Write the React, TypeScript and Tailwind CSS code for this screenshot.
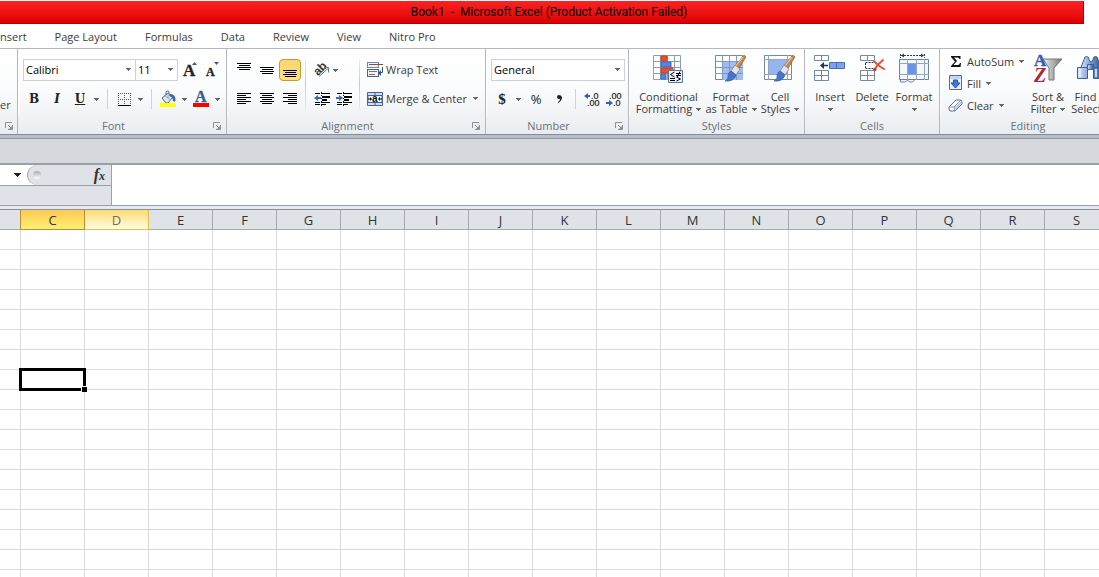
import React from "react";

const LETTERS = "CDEFGHIJKLMNOPQRS".split("");
const ROWS = Array.from({ length: 18 }, (_, i) => i + 1);
const ACTIVE_ROW = 8;
const TABS = ["nsert", "Page Layout", "Formulas", "Data", "Review", "View", "Nitro Pro"];

type Kids = { children?: React.ReactNode };

function Svg({ w, h, children }: Kids & { w: number; h: number }) {
  return (
    <svg width={w} height={h} viewBox={`0 0 ${w} ${h}`} fill="none" aria-hidden="true" className="block shrink-0 overflow-visible">
      {children}
    </svg>
  );
}

function Caret({ dark = false }: { dark?: boolean }) {
  return dark ? (
    <Svg w={7} h={4}><path d="M0 0h7v1H6v1H5v1H4v1H3V3H2V2H1V1H0z" fill="#222" /></Svg>
  ) : (
    <Svg w={5} h={3}><path d="M0 0h5v1H4v1H3v1H2V2H1V1H0z" fill="#686868" /></Svg>
  );
}

function IconButton({ label, active = false, children }: Kids & { label: string; active?: boolean }) {
  return (
    <button
      type="button"
      aria-label={label}
      aria-pressed={active || undefined}
      className={
        active
          ? "flex h-[22px] w-[22px] shrink-0 items-center justify-center rounded-sm border border-[#c29b3a] bg-linear-to-b from-[#fbd570] to-[#ffe27a]"
          : "flex h-[22px] w-[22px] shrink-0 items-center justify-center"
      }
    >
      {children}
    </button>
  );
}

function CaretButton({ label }: { label: string }) {
  return (
    <button type="button" aria-label={label} className="flex h-[22px] w-[11px] shrink-0 items-center justify-center">
      <Caret />
    </button>
  );
}

function Rule() {
  return <div className="mx-[5px] h-5 w-px shrink-0 bg-[#cfd2d7]" />;
}

function TallRule() {
  return <div className="mr-[5px] ml-1 w-px shrink-0 bg-linear-to-b from-[#eceef0] via-[#c3c7cd] to-[#eceef0]" />;
}

function Group({ title, width, launcher = false, children }: Kids & { title: string; width: string; launcher?: boolean }) {
  return (
    <section aria-label={title} className={`flex shrink-0 flex-col border-r border-[#b4b8be] ${width}`}>
      <div className="flex h-[68px] border-l border-white">{children}</div>
      <div className="flex h-4 items-center">
        <span className="flex-1 text-center text-[#6b7078]">{title}</span>
        {launcher && (
          <button type="button" aria-label={`${title} settings`} className="flex w-[17px] justify-center pt-px pr-px">
            <Svg w={8} h={8}>
              <path d="M0.5 6V.5H7" stroke="#8c9096" />
              <path d="M3 3l3 3M7.500 3v4.500H3" stroke="#8c9096" />
              <path d="M7 4v3H4z" fill="#8c9096" />
            </Svg>
          </button>
        )}
      </div>
    </section>
  );
}

function Drop({ label, value, width }: { label: string; value: string; width: string }) {
  return (
    <div className={`relative h-[22px] shrink-0 ${width}`}>
      <select
        aria-label={label}
        defaultValue={value}
        className="block h-full w-full appearance-none border border-[#cdd1d6] bg-white pb-0.5 pl-0.5 text-black outline-none"
      >
        <option>{value}</option>
      </select>
      <span className="pointer-events-none absolute top-[9px] right-[5px]">
        <Caret />
      </span>
    </div>
  );
}

function BigButton({ lines, width, icon }: { lines: [string, string]; width: string; icon: React.ReactNode }) {
  return (
    <button type="button" className={`flex shrink-0 flex-col items-center whitespace-nowrap pt-[5px] leading-3 ${width}`}>
      <span className="flex h-[30px] items-center">{icon}</span>
      <span className="mt-[7px] h-3">{lines[0]}</span>
      <span className="flex h-3 items-center gap-1">
        {lines[1]}
        <Caret />
      </span>
    </button>
  );
}

function Lines({ rows }: { rows: [number, number, number][] }) {
  return (
    <Svg w={16} h={16}>
      {rows.map(([x, y, w]) => <rect key={y} x={x} y={y} width={w} height={1} fill="#000" shapeRendering="crispEdges" />)}
    </Svg>
  );
}

const GrowFont = () => (
  <Svg w={18} h={18}>
    <text x="2" y="15" fontFamily="Liberation Serif" fontWeight="bold" fontSize="17" fill="#222" stroke="#222" strokeWidth=".3">A</text>
    <path d="M11 4l2.500-3L16 4z" fill="#3458a8" />
  </Svg>
);
const ShrinkFont = () => (
  <Svg w={18} h={18}>
    <text x="3" y="15" fontFamily="Liberation Serif" fontWeight="bold" fontSize="12" fill="#222" stroke="#222" strokeWidth=".3">A</text>
    <path d="M11 1l2.500 3L16 1z" fill="#3458a8" />
  </Svg>
);
const Borders = () => (
  <Svg w={14} h={14}>
    <path d="M1.500 1v12M7.500 1v12M13.500 1v12M1 1.500h13M1 7.500h13" stroke="#555" strokeDasharray="1 1" />
    <path d="M1 13.500h13" stroke="#000" />
  </Svg>
);
const Bucket = () => (
  <Svg w={18} h={18}>
    <path d="M7 5V2.500Q7 1 8.500 1T10 2.500V6" stroke="#48556a" />
    <path d="M3 8l6-5 5 4-5 6H7z" fill="#dce8f6" stroke="#4d607e" />
    <path d="M6 6l6 4M9 3v5" stroke="#8ca5c5" />
    <path d="M11 4q6 0 5.500 7-1 1.500-2.500 0 0-4-4-5z" fill="#3e65aa" />
    <path d="M1 13h16v4H1z" fill="#ffff00" />
  </Svg>
);
const FontColor = () => (
  <Svg w={18} h={18}>
    <text x="3" y="12" fontFamily="Liberation Serif" fontWeight="bold" fontSize="16" fill="#35599b" stroke="#35599b" strokeWidth=".3">A</text>
    <path d="M1 13h16v4H1z" fill="#ff0000" />
  </Svg>
);
const Orientation = () => (
  <Svg w={18} h={18}>
    <text x="1" y="12" transform="rotate(-45 7 9)" fontFamily="Liberation Sans" fontWeight="bold" fontSize="12" fill="#333">ab</text>
    <path d="M6 15.500l9-8M11 6.500h4.500v5" stroke="#777" />
  </Svg>
);
function Indent({ inward = false }: { inward?: boolean }) {
  return (
    <Svg w={17} h={16}>
      <g shapeRendering="crispEdges" fill="#000">
        <path d="M1 2h5v1H1zM7 2h9v1H7zM8 5h8v2H8zM8 8h5v2H8zM1 11h5v1H1zM7 11h9v1H7zM1 13h5v1H1zM7 13h5v1H7z" />
        <path d="M7 1h1v1H7zM7 4h1v1H7zM7 7h1v1H7zM7 10h1v1H7zM7 14h1v1H7z" />
      </g>
      {inward ? (
        <path d="M3 4l4 3-4 3V8H0V6h3z" fill="#3a68c4" />
      ) : (
        <path d="M4 4L0 7l4 3V8h3V6H4z" fill="#3a68c4" />
      )}
    </Svg>
  );
}
const WrapIcon = () => (
  <Svg w={17} h={16}>
    <rect x=".5" y=".5" width="11" height="5" fill="#eef3fa" stroke="#7088ab" />
    <path d="M2 2.500h14" stroke="#934f2b" />
    <rect x=".5" y="7.500" width="11" height="7" fill="#eef3fa" stroke="#41659a" />
    <path d="M2 9.500h8M2 12.500h6" stroke="#a8653b" />
    <path d="M15.500 5v5.500H13" stroke="#35537f" />
    <path d="M14 8v6l-3-3z" fill="#35537f" />
  </Svg>
);
const MergeIcon = () => (
  <Svg w={17} h={16}>
    <path d="M.5 1.500h15v13H.5zM8 1v3M8 12v3" fill="#cfddf0" stroke="#41659a" />
    <path d="M1 4.500h14v7H1z" fill="#fff" stroke="#41659a" />
    <text x="5" y="11" fontFamily="Liberation Sans" fontWeight="bold" fontSize="10" fill="#111">a</text>
    <path d="M1 8h3M12 8h3" stroke="#111" />
    <path d="M3 6l2 2-2 2zM13 6l-2 2 2 2z" fill="#111" />
  </Svg>
);
function Decimal({ less = false }: { less?: boolean }) {
  return (
    <Svg w={18} h={16}>
      <g fontFamily="Liberation Sans" fontSize="9" fill="#222" stroke="#222" strokeWidth=".2">
        <text x={less ? 4 : 8} y="8">{less ? ".00" : ".0"}</text>
        <text x={less ? 8 : 4} y="15">{less ? ".0" : ".00"}</text>
      </g>
      {less ? (
        <path d="M1 11h3V9l4 3-4 3v-2H1z" fill="#315fc0" />
      ) : (
        <path d="M7 4H5V2L1 5l4 3V6h2z" fill="#315fc0" />
      )}
    </Svg>
  );
}
const Brush = () => (
  <g>
    <path d="M29 1l2 2-8 13-4-3z" fill="#c58545" stroke="#855d3a" strokeWidth=".6" />
    <path d="M28 3l-7 9" stroke="#efcb9a" strokeWidth="1.200" />
    <path d="M20 11l5 4-4 6-5-4z" fill="#e3e6e9" stroke="#747c86" strokeWidth=".7" />
    <path d="M16 17l5 4q-2 7-11 6 4-2 3-6 1-3 3-4z" fill="#4775c8" stroke="#2e539c" strokeWidth=".6" />
  </g>
);
const Conditional = () => (
  <Svg w={32} h={30}>
    <g stroke="#8b9fb9">
      <path d="M.5 1.500h27v24H.5z" fill="#fff" />
      <path d="M0 7.500h28M0 13.500h28M0 19.500h28M7.500 1v25M14.500 1v25M21.500 1v25" />
    </g>
    <path d="M8 2h6v5H8zM8 14h12v5H8z" fill="#ee4b2d" stroke="#d83d22" />
    <path d="M8 8h10v5H8zM8 20h5v5H8z" fill="#5685e2" stroke="#3e69ba" />
    <path d="M15.500 16.500h14v12h-14z" fill="#eef2f8" stroke="#52749f" />
    <path d="M21.500 18l-4 2.500 4 2.500M17 24.500h5M17 26.500h5M23 19.500h5M23 21.500h5M27 17.500l-3 6M23.500 23l4 2-4 2" stroke="#000" />
  </Svg>
);
const TableStyle = () => (
  <Svg w={32} h={30}>
    <path d="M.5 1.500h27v24H.5z" fill="#fff" stroke="#7189a9" />
    <path d="M8 8h20v18H8z" fill="#9fbdf2" />
    <path d="M0 7.500h28M0 13.500h28M0 19.500h28M7.500 1v25M14.500 1v25M21.500 1v25" stroke="#7f99bd" />
    <Brush />
  </Svg>
);
const CellStyle = () => (
  <Svg w={32} h={30}>
    <path d="M.5 1.500h27v24H.5z" fill="#fff" stroke="#7189a9" />
    <path d="M5 6h19v15H5z" fill="#94b5f0" />
    <path d="M0 5.500h28M0 20.500h28M4.500 1v25M23.500 1v25" stroke="#91a6c2" />
    <Brush />
  </Svg>
);
const Stacks = () => (
  <path d="M.5 1.500h14v5H.5zM7.500 1.500v5M.5 16.500h14v10H.5zM7.500 16.500v10M.5 21.500h14" fill="#fff" stroke="#7588a3" />
);
const InsertIcon = () => (
  <Svg w={32} h={30}>
    <Stacks />
    <path d="M15.500 8.500h15v6h-15zM22.500 8.500v6" fill="#7ba2ed" stroke="#476eb1" />
    <path d="M14 11.500H8" stroke="#1f3552" strokeWidth="1.500" />
    <path d="M10 8l-4 3.500 4 3.500z" fill="#1f3552" />
  </Svg>
);
const DeleteIcon = () => (
  <Svg w={24} h={30}>
    <Stacks />
    <path d="M5.500 8.500h12M5.500 14.500h9M5.500 9v6" stroke="#263f68" strokeDasharray="2 1" />
    <path d="M14 7q3 4 10 8M23 6q-5 4-9 10" stroke="#ee4d31" strokeWidth="2" strokeLinecap="round" />
    <circle cx="15" cy="15.500" r="1.500" fill="#e32915" />
  </Svg>
);
const FormatIcon = () => (
  <Svg w={32} h={30}>
    <path d="M3 1.500h22M2.500 0v4M26.500 0v4" stroke="#263f5f" strokeDasharray="2 1" />
    <path d="M3 1.500l3-2v4zM26 1.500l-3-2v4z" fill="#263f5f" />
    <path d="M2.500 26v2h5l2-2 2 2h3l2-2" fill="#eef3fa" stroke="#71839c" />
    <path d="M1.500 5.500h29v20h-29z" fill="#f4f7fc" stroke="#6d819f" />
    <path d="M10 10h8v11h-8z" fill="#6994e9" />
    <path d="M1 9.500h30M1 20.500h30M9.500 5v21M18.500 5v21M26.500 5v21" stroke="#94a7c3" />
  </Svg>
);
const SortIcon = () => (
  <Svg w={30} h={30}>
    <defs>
      <linearGradient id="funnel"><stop stopColor="#eee" /><stop offset="1" stopColor="#777" /></linearGradient>
    </defs>
    <path d="M10 5h19l-8 9v12h-5V14z" fill="url(#funnel)" stroke="#777" />
    <text x="1" y="12" fontFamily="Liberation Serif" fontWeight="bold" fontSize="17" fill="#355ea9" stroke="#355ea9" strokeWidth=".4">A</text>
    <text x="1" y="28" fontFamily="Liberation Serif" fontWeight="bold" fontStyle="italic" fontSize="20" fill="#ad2834">Z</text>
  </Svg>
);
const FindIcon = () => (
  <Svg w={28} h={28}>
    <defs>
      <linearGradient id="lens"><stop stopColor="#dbe8fc" /><stop offset=".5" stopColor="#7698d0" /><stop offset="1" stopColor="#31578f" /></linearGradient>
    </defs>
    <g fill="url(#lens)" stroke="#3e5f94">
      <path d="M7 4.500Q7 1.500 9.500 1.500T12 4.500l2 3 2-3q0-3 2.500-3T21 4.500l3 8H4z" />
      <path d="M.5 12.500h10v11H.5zM16.500 12.500h10v11h-10z" />
      <path d="M10.500 9.500h6v5h-6z" />
    </g>
    <path d="M3 14v8M19 14v8" stroke="#e8f1ff" strokeWidth="1.500" />
  </Svg>
);
const SigmaIcon = () => (
  <Svg w={14} h={14}>
    <path d="M2 2h9.500v3h-1Q10 3.500 8.500 3.500H5L8 7l-3.500 4H9q1.500 0 2-2h1l-.5 4H2v-1l4-4.500L2 3z" fill="#111" />
  </Svg>
);
const FillIcon = () => (
  <Svg w={14} h={16}>
    <path d="M.5.5h12v14H.5z" fill="#eaf1fc" stroke="#52709e" />
    <path d="M1 1h11v3H1z" fill="#c5d6ef" />
    <path d="M4.500 5h4v3H11l-4.500 5L2 8h2.500z" fill="#3f78df" stroke="#244fa6" />
  </Svg>
);
const EraserIcon = () => (
  <Svg w={15} h={13}>
    <path d="M1 8l7-7h5l1 2v2l-7 7H2L1 10z" fill="#fff" stroke="#5b7194" />
    <path d="M1 8h5l7-7M6 8l1 4" stroke="#7d92b2" />
    <path d="M6.500 8.500L13 2.500l.5 2.500L7 11z" fill="#b6cae8" />
  </Svg>
);

function SmallAction({ icon, children }: Kids & { icon: React.ReactNode }) {
  return (
    <button type="button" className="flex h-[22px] items-center whitespace-nowrap">
      <span className="mr-1 flex w-[15px] justify-center">{icon}</span>
      {children}
      <span className="ml-[5px]"><Caret /></span>
    </button>
  );
}

function FontGroup() {
  return (
    <Group title="Font" width="w-[209px]" launcher>
      <div className="flex flex-col gap-[7px] pt-[10px] pl-1">
        <div className="flex">
          <Drop label="Font" value="Calibri" width="w-[113px]" />
          <Drop label="Font size" value="11" width="-ml-px w-[43px]" />
          <div className="ml-px flex">
            <IconButton label="Increase font size"><GrowFont /></IconButton>
            <IconButton label="Decrease font size"><ShrinkFont /></IconButton>
          </div>
        </div>
        <div className="flex items-center">
          <div className="flex gap-px font-['DejaVu_Serif',serif] text-[12px] text-[#222]">
            <IconButton label="Bold"><b>B</b></IconButton>
            <IconButton label="Italic"><i className="font-semibold">I</i></IconButton>
            <IconButton label="Underline"><u className="font-semibold">U</u></IconButton>
          </div>
          <CaretButton label="Underline styles" />
          <Rule />
          <IconButton label="Borders"><Borders /></IconButton>
          <CaretButton label="Border styles" />
          <Rule />
          <IconButton label="Fill color"><Bucket /></IconButton>
          <CaretButton label="Fill colors" />
          <IconButton label="Font color"><FontColor /></IconButton>
          <CaretButton label="Font colors" />
        </div>
      </div>
    </Group>
  );
}

function AlignmentGroup() {
  return (
    <Group title="Alignment" width="w-[259px]" launcher>
      <div className="flex pt-[10px] pb-[7px] pl-[5px]">
        <div className="grid grid-cols-3 content-start gap-x-px gap-y-[7px]">
          <IconButton label="Top align"><Lines rows={[[1, 1, 14], [3, 3, 11], [1, 5, 14], [3, 7, 11]]} /></IconButton>
          <IconButton label="Middle align"><Lines rows={[[1, 5, 14], [3, 7, 11], [1, 9, 14], [3, 11, 11]]} /></IconButton>
          <IconButton label="Bottom align" active><Lines rows={[[1, 8, 14], [3, 10, 11], [1, 12, 14], [3, 14, 11]]} /></IconButton>
          <IconButton label="Align left"><Lines rows={[[1, 2, 14], [1, 4, 9], [1, 6, 14], [1, 8, 9], [1, 10, 14], [1, 12, 9]]} /></IconButton>
          <IconButton label="Align center"><Lines rows={[[1, 2, 14], [3, 4, 10], [1, 6, 14], [3, 8, 10], [1, 10, 14], [3, 12, 10]]} /></IconButton>
          <IconButton label="Align right"><Lines rows={[[1, 2, 14], [6, 4, 9], [1, 6, 14], [6, 8, 9], [1, 10, 14], [6, 12, 9]]} /></IconButton>
        </div>
        <TallRule />
        <div className="flex flex-col gap-[7px]">
          <div className="flex">
            <IconButton label="Orientation"><Orientation /></IconButton>
            <button type="button" aria-label="Orientation options" className="flex w-[7px] items-center">
              <Caret />
            </button>
          </div>
          <div className="flex">
            <IconButton label="Decrease indent"><Indent /></IconButton>
            <IconButton label="Increase indent"><Indent inward /></IconButton>
          </div>
        </div>
        <TallRule />
        <div className="flex flex-col items-start gap-[7px] pl-0.5 whitespace-nowrap">
          <button type="button" className="flex h-[22px] items-center gap-0.5 pb-px"><WrapIcon />Wrap Text</button>
          <button type="button" className="flex h-[22px] items-center gap-0.5 pb-px">
            <MergeIcon />Merge &amp; Center<span className="ml-1"><Caret /></span>
          </button>
        </div>
      </div>
    </Group>
  );
}

function NumberGroup() {
  return (
    <Group title="Number" width="w-[143px]" launcher>
      <div className="flex flex-col gap-[7px] pt-[10px] pl-1">
        <Drop label="Number format" value="General" width="w-[134px]" />
        <div className="flex items-center">
          <IconButton label="Currency"><b className="font-['Liberation_Serif',serif] text-[15px] text-[#222]">$</b></IconButton>
          <CaretButton label="Currency formats" />
          <div className="ml-px flex gap-px">
            <IconButton label="Percent"><span className="text-[13px] text-[#222]">%</span></IconButton>
            <IconButton label="Comma style">
              <Svg w={5} h={8}><path d="M0 2q0-2 2-2t3 2q0 4-4 6V7q2-1 2-3Q0 4 0 2z" fill="#222" /></Svg>
            </IconButton>
          </div>
          <Rule />
          <IconButton label="Increase decimal"><Decimal /></IconButton>
          <IconButton label="Decrease decimal"><Decimal less /></IconButton>
        </div>
      </div>
    </Group>
  );
}

function Ribbon() {
  return (
    <div className="flex h-[87px] shrink-0 overflow-hidden border-t border-b border-t-[#b5b8be] border-b-[#868c95] bg-linear-to-b from-white via-[#fafbfc] to-[#e9ecf0]">
      <section aria-label="Clipboard" className="flex w-[18px] shrink-0 flex-col justify-between border-r border-[#b4b8be]">
        <button type="button" className="mt-12 text-left">er</button>
        <button type="button" aria-label="Clipboard settings" className="mb-1 flex justify-center">
          <Svg w={8} h={8}>
            <path d="M0.5 6V.5H7" stroke="#8c9096" />
            <path d="M3 3l3 3M7.500 3v4.500H3" stroke="#8c9096" />
            <path d="M7 4v3H4z" fill="#8c9096" />
          </Svg>
        </button>
      </section>
      <FontGroup />
      <AlignmentGroup />
      <NumberGroup />
      <Group title="Styles" width="w-[176px]">
        <div className="flex pl-1">
          <BigButton lines={["Conditional", "Formatting"]} width="w-[69px]" icon={<Conditional />} />
          <BigButton lines={["Format", "as Table"]} width="w-[56px]" icon={<TableStyle />} />
          <BigButton lines={["Cell", "Styles"]} width="w-[42px]" icon={<CellStyle />} />
        </div>
      </Group>
      <Group title="Cells" width="w-[135px]">
        <div className="flex pl-[3px]">
          <BigButton lines={["Insert", ""]} width="w-[42px]" icon={<InsertIcon />} />
          <BigButton lines={["Delete", ""]} width="w-[42px]" icon={<DeleteIcon />} />
          <BigButton lines={["Format", ""]} width="w-[42px]" icon={<FormatIcon />} />
        </div>
      </Group>
      <Group title="Editing" width="w-[177px]">
        <div className="flex w-[87px] shrink-0 flex-col items-start pt-px pl-[7px]">
          <SmallAction icon={<SigmaIcon />}>AutoSum</SmallAction>
          <SmallAction icon={<FillIcon />}>Fill</SmallAction>
          <SmallAction icon={<EraserIcon />}>Clear</SmallAction>
        </div>
        <BigButton lines={["Sort &", "Filter"]} width="w-[40px]" icon={<SortIcon />} />
        <BigButton lines={["Find &", "Select"]} width="w-[46px]" icon={<FindIcon />} />
      </Group>
    </div>
  );
}

function FormulaBar() {
  return (
    <div className="flex h-[41px] shrink-0 border-b border-[#9a9fa8] bg-white">
      <div className="flex w-28 shrink-0 flex-col border-r border-[#9a9fa8] bg-[#dfe2e6]">
        <div className="flex h-[21px] border-b border-[#9a9fa8] bg-white">
          <button type="button" aria-label="Name box" className="flex w-[27px] items-center justify-end pr-[6px]">
            <Caret dark />
          </button>
          <div className="flex flex-1 items-center justify-between rounded-l-full border-l border-[#9a9fa8] bg-[#dfe2e6] pr-[6px] pl-[5px]">
            <span className="size-2 rounded-full bg-linear-to-b from-[#a9acb0] to-white" />
            <button type="button" aria-label="Insert function" className="font-['Liberation_Serif',serif] text-base leading-4 font-bold text-[#333] italic">
              f<span className="text-xs">x</span>
            </button>
          </div>
        </div>
      </div>
      <input aria-label="Formula" className="min-w-0 flex-1 bg-white px-1 outline-none" />
    </div>
  );
}

function headClass(letter: string) {
  if (letter === "C") return "h-5 border-r border-b border-[#c08a35] bg-linear-to-b from-[#fdc956] to-[#fef071] p-0 font-normal text-[#333]";
  if (letter === "D") return "h-5 border-r border-b border-[#e6be45] bg-linear-to-b from-[#fedb70] to-[#fffce0] p-0 font-normal text-[#6b6f62]";
  return "h-5 border-r border-b border-[#a5a9b0] bg-[#dfe2e6] p-0 font-normal text-[#333]";
}

function Sheet() {
  return (
    <div className="min-h-0 flex-1 overflow-hidden border-t border-[#8c9099] bg-white">
      <table className="w-[1109px] table-fixed border-separate border-spacing-0 text-[13px] leading-4">
        <colgroup>
          <col className="w-[21px]" />
          {LETTERS.map((l) => <col key={l} className="w-16" />)}
        </colgroup>
        <thead>
          <tr>
            <th aria-label="B" className="h-5 border-r border-b border-r-[#c08a35] border-b-[#a5a9b0] bg-[#dfe2e6] p-0" />
            {LETTERS.map((l) => <th key={l} scope="col" className={headClass(l)}>{l}</th>)}
          </tr>
        </thead>
        <tbody>
          {ROWS.map((r) => (
            <tr key={r}>
              <td className="h-5 border-r border-b border-[#d9dadb] p-0" />
              {LETTERS.map((l) => (
                <td key={l} className="relative h-5 border-r border-b border-[#d9dadb] p-0">
                  {r === ACTIVE_ROW && l === "C" && (
                    <div className="absolute -inset-0.5 z-10 border-3 border-black">
                      <span className="absolute -right-1 -bottom-1 size-[6px] border-t border-l border-white bg-black" />
                    </div>
                  )}
                </td>
              ))}
            </tr>
          ))}
        </tbody>
      </table>
    </div>
  );
}

export default function App() {
  return (
    <div className="flex h-screen flex-col overflow-hidden bg-white font-['Open_Sans','Noto_Sans',sans-serif] text-[11px] leading-[15px] text-[#3b3b3b]">
      <header className="mt-px mr-[15px] flex h-[23px] shrink-0 items-center justify-center border-r border-b border-[#b80000] bg-linear-to-b from-[#ff2020] to-[#dc0000] pl-[15px] text-black">
        <h1 className="font-['Roboto',sans-serif] text-[12px] whitespace-pre">Book1  -  Microsoft Excel (Product Activation Failed)</h1>
      </header>
      <nav className="flex h-6 shrink-0 items-center gap-7">
        {TABS.map((t) => <a key={t} href="#" className="whitespace-nowrap">{t}</a>)}
      </nav>
      <Ribbon />
      <div className="h-[3px] shrink-0 bg-[#b9bec6]" />
      <div className="h-[27px] shrink-0 border-t border-b-2 border-t-[#8f96a1] border-b-[#9a9fa8] bg-[#d5d9de]" />
      <FormulaBar />
      <div className="h-[3px] shrink-0 bg-[#e6e8ef]" />
      <Sheet />
    </div>
  );
}
